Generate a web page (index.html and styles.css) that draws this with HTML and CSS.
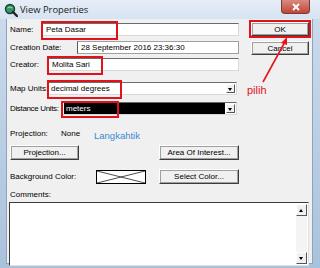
FILE: index.html
```
<!DOCTYPE html>
<html lang="en">
<head>
    <meta charset="UTF-8">
    <title>View Properties</title>
    <link rel="stylesheet" href="styles.css">
</head>
<body>
    <div class="window">
        <div class="titlebar">
            <svg class="app-icon" width="14" height="14" viewBox="0 0 14 14">
                <circle cx="6" cy="6" r="4.5" fill="#2e9a6a" stroke="#1d3b2e" stroke-width="1.4"/>
                <path d="M3.5 5 Q6 3 8.5 5" stroke="#9fe0b8" stroke-width="1" fill="none"/>
                <path d="M9 9 L13 13" stroke="#222" stroke-width="2.4" stroke-linecap="round"/>
            </svg>
            <span class="title">View Properties</span>
            <div class="close">
                <svg width="10" height="8" viewBox="0 0 10 8">
                    <path d="M2 1 L8 7 M8 1 L2 7" stroke="#fff" stroke-width="1.8"/>
                </svg>
            </div>
        </div>

        <div class="client">
            <div class="top">
                <div class="form">
                    <div class="row row-name">
                        <span class="label w-name">Name:</span>
                        <div class="field">
                            Peta Dasar
                            <span class="mark mark-name"></span>
                        </div>
                    </div>
                    <div class="row row-date">
                        <span class="label w-date">Creation Date:</span>
                        <div class="field field-disabled">28 September 2016 23:36:30</div>
                    </div>
                    <div class="row row-creator">
                        <span class="label w-creator">Creator:</span>
                        <div class="field">
                            Molita Sari
                            <span class="mark mark-creator"></span>
                        </div>
                    </div>
                    <div class="row row-map">
                        <span class="label w-creator">Map Units:</span>
                        <div class="field combo">
                            <span class="combo-text">decimal degrees</span>
                            <span class="drop"></span>
                            <span class="mark mark-map"></span>
                        </div>
                    </div>
                    <div class="row row-dist">
                        <span class="label w-dist tight">Distance Units:</span>
                        <div class="field combo combo-selected">
                            <span class="combo-text">meters</span>
                            <span class="drop"></span>
                            <span class="mark mark-dist"></span>
                        </div>
                    </div>
                    <div class="row row-proj">
                        <span class="label w-dist">Projection:</span>
                        <span class="none">None</span>
                        <span class="note">Langkahtik</span>
                    </div>
                    <div class="row row-buttons">
                        <div class="button btn-proj">Projection...</div>
                        <div class="button btn-area">Area Of Interest...</div>
                    </div>
                    <div class="row row-color">
                        <span class="label w-color">Background Color:</span>
                        <svg class="swatch" width="50" height="14" viewBox="0 0 50 14">
                            <rect x="0.5" y="0.5" width="49" height="13" fill="#fff" stroke="#000"/>
                            <path d="M1 1 L49 13 M49 1 L1 13" stroke="#000" stroke-width="0.7"/>
                        </svg>
                        <div class="button btn-color">Select Color...</div>
                    </div>
                </div>
                <div class="side">
                    <div class="button btn-side btn-ok">OK</div>
                    <div class="button btn-side">Cancel</div>
                </div>
            </div>
            <div class="comments-label">Comments:</div>
            <div class="comments">
                <div class="scrollbar">
                    <span class="sb-btn sb-up"></span>
                    <span class="sb-track"></span>
                    <span class="sb-btn sb-down"></span>
                </div>
            </div>
        </div>

        <svg class="annotation" width="40" height="50" viewBox="0 0 40 50">
            <path d="M4 46 L27 4" stroke="#e8141c" stroke-width="1.6"/>
            <path d="M28 1 L22 7 L28 9 Z" fill="#e8141c"/>
        </svg>
        <span class="pilih">pilih</span>
    </div>
</body>
</html>
```

FILE: styles.css
```
body {
    margin: 0;
    font-family: "Liberation Sans", Arial, sans-serif;
    font-size: 8px;
    color: #000;
}
.window {
    position: relative;
    width: 320px;
    height: 268px;
    background: linear-gradient(#cddcec, #a9c2dc);
    overflow: hidden;
}
.titlebar {
    display: flex;
    align-items: center;
    height: 19px;
    padding-left: 4px;
    background: linear-gradient(#e6eef7, #d6e3f1);
}
.app-icon {
    margin-right: 2px;
}
.title {
    font-family: "Open Sans", "Liberation Sans", sans-serif;
    font-size: 9.4px;
    color: #1a1a1a;
}
.close {
    display: flex;
    align-items: center;
    justify-content: center;
    margin-left: auto;
    margin-right: 10px;
    align-self: flex-start;
    width: 27px;
    height: 13px;
    background: linear-gradient(#d98a7f, #c0463a);
    border: 1px solid #7c3a33;
    border-top: none;
    border-radius: 0 0 4px 4px;
}
.client {
    height: 245px;
    margin: 0 7px 0 6px;
    padding: 4px 3px 0 3px;
    box-sizing: border-box;
    background: #f0f0f0;
    border: 1px solid #8ea4bd;
    border-top: none;
}
.top {
    display: flex;
}
.form {
    width: 231px;
}
.side {
    display: flex;
    flex-direction: column;
    gap: 5px;
    margin-left: 12px;
    margin-top: -1px;
    width: 58px;
}
.row {
    display: flex;
    align-items: center;
    height: 13px;
    white-space: nowrap;
}
.row-date { margin-top: 5px; }
.row-creator { margin-top: 4px; }
.row-map { margin-top: 11px; }
.row-dist { margin-top: 7px; }
.row-proj { margin-top: 12px; height: 12px; }
.row-buttons { margin-top: 6px; height: 15px; justify-content: space-between; }
.row-color { margin-top: 9px; height: 15px; }

.label { flex: none; }
.w-name { width: 32px; }
.w-date { width: 67px; }
.w-creator { width: 38px; }
.w-dist { width: 51px; }
.w-color { width: 86px; }
.tight { letter-spacing: -0.35px; }

.field {
    position: relative;
    flex: 1;
    height: 13px;
    box-sizing: border-box;
    padding-left: 3px;
    line-height: 11px;
    background: #fff;
    border: 1px solid #d9d9d9;
    border-top-color: #6b6b6b;
    border-left-color: #6b6b6b;
}
.field-disabled {
    border-color: #a0a0a0;
    border-left-color: #5a5a5a;
}
.combo {
    display: flex;
    margin-right: 2px;
    padding-left: 2px;
}
.combo-text {
    flex: 1;
}
.combo-selected .combo-text {
    background: #000;
    color: #fff;
    padding-left: 2px;
}
.drop {
    width: 9px;
    margin: 1px;
    box-sizing: border-box;
    background: #f0f0f0;
    border: 1px solid #fff;
    border-right-color: #555;
    border-bottom-color: #555;
    position: relative;
}
.drop::after {
    content: "";
    position: absolute;
    left: 1px;
    top: 3px;
    border-left: 2.5px solid transparent;
    border-right: 2.5px solid transparent;
    border-top: 3px solid #000;
}
.mark {
    position: absolute;
    top: -3px;
    left: -2px;
    height: 15px;
    border: 2px solid #e2121a;
}
.mark-name { width: 73px; }
.mark-creator { width: 52px; }
.mark-map { width: 71px; }
.mark-dist { left: -1px; top: -2px; width: 54px; height: 13px; }

.none {
    width: 33px;
}
.note {
    font-size: 9.5px;
    color: #3a8ad2;
    margin-top: 4px;
}
.button {
    display: flex;
    align-items: center;
    justify-content: center;
    height: 15px;
    box-sizing: border-box;
    background: #f0f0f0;
    border: 1px solid #fff;
    border-right-color: #3c3c3c;
    border-bottom-color: #3c3c3c;
    box-shadow: 1px 1px 0 #a0a0a0 inset, -1px -1px 0 #a0a0a0 inset;
}
.btn-proj { width: 69px; }
.btn-area { width: 80px; }
.btn-color {
    width: 80px;
    margin-left: auto;
}
.btn-side {
    width: 58px;
    height: 14px;
}
.btn-ok {
    outline: 2px solid #e2121a;
}
.comments-label {
    margin-top: 6px;
    height: 11px;
}
.comments {
    display: flex;
    justify-content: flex-end;
    height: 62px;
    margin: 1px 0 0 -1px;
    background: #fff;
    border: 1px solid #e0e0e0;
    border-top: 1px solid #3c3c3c;
    border-left: 1px solid #3c3c3c;
}
.scrollbar {
    display: flex;
    flex-direction: column;
    width: 11px;
    margin: 1px;
}
.sb-track {
    flex: 1;
    background: #f4f4f4;
}
.sb-btn {
    position: relative;
    height: 12px;
    box-sizing: border-box;
    background: #f0f0f0;
    border: 1px solid #fff;
    border-right-color: #555;
    border-bottom-color: #555;
}
.sb-btn::after {
    content: "";
    position: absolute;
    left: 2px;
    top: 4px;
    border-left: 2.5px solid transparent;
    border-right: 2.5px solid transparent;
}
.sb-up::after { border-bottom: 3px solid #000; }
.sb-down::after { border-top: 3px solid #000; }

.annotation {
    position: absolute;
    left: 259px;
    top: 36px;
}
.pilih {
    position: absolute;
    left: 247px;
    top: 84px;
    font-size: 11px;
    color: #e2121a;
}
```
